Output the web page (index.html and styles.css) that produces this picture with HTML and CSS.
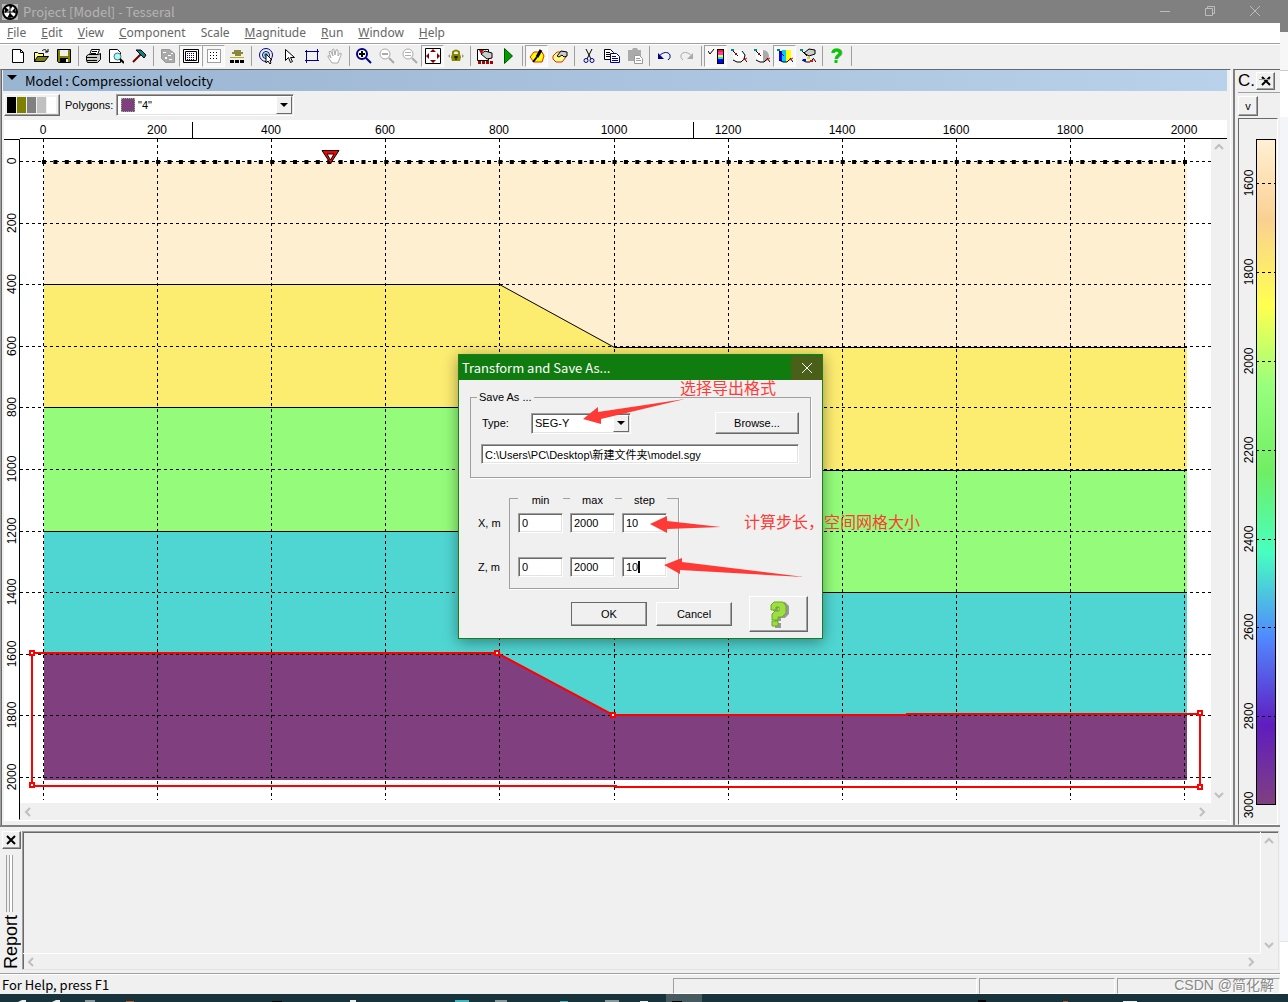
FILE: index.html
```html
<!DOCTYPE html>
<html lang="en">
<head>
  <meta charset="utf-8">
  <title>Project [Model] - Tesseral</title>
  <link rel="stylesheet" href="styles.css">
</head>
<body>
  <header class="titlebar">
    <svg class="app-icon" width="16" height="16"><rect width="16" height="16" fill="#bbb"/><circle cx="8" cy="8" r="7" fill="#fff" stroke="#000" stroke-width="2"/><path d="M3 3l4 3-4 3zM13 4l-3 3 4 3zM5 14l3-5 4 4zM7 1h4l-2 4z"/><path d="M1 8h14M8 1v14" stroke="#000"/></svg>
    <h1>Project [Model] - Tesseral</h1>
    <div class="window-buttons">
      <button aria-label="Minimize"><svg width="12" height="12"><path d="M1 6.5h10"/></svg></button>
      <button aria-label="Restore"><svg width="12" height="12"><path d="M1.5 3.5h7v7h-7zM3.5 3v-1.5h7v7h-2"/></svg></button>
      <button aria-label="Close"><svg width="12" height="12"><path d="M1 1l10 10M11 1l-10 10"/></svg></button>
    </div>
  </header>

  <div class="desktop">
    <div class="app">
      <nav class="menu">
        <a href="#"><u>F</u>ile</a>
        <a href="#"><u>E</u>dit</a>
        <a href="#"><u>V</u>iew</a>
        <a href="#"><u>C</u>omponent</a>
        <a href="#">Scale</a>
        <a href="#"><u>M</u>agnitude</a>
        <a href="#"><u>R</u>un</a>
        <a href="#"><u>W</u>indow</a>
        <a href="#"><u>H</u>elp</a>
      </nav>

      <div class="toolbar">
        <button aria-label="New"><svg width="16" height="16"><path d="M2.5 1.5h8l3 3v10h-11zM10.5 1.5v3h3" fill="#fff" stroke="#000"/></svg></button>
        <button aria-label="Open"><svg width="16" height="16"><path d="M1.5 13.5v-9h3l1 1h5v3" fill="#ff8" stroke="#000"/><path d="M1.5 13.5l3-5h11l-4 5z" fill="#808000" stroke="#000"/><path d="M9 3c2-2 4-2 5 1m-2 0h3v-3" fill="none" stroke="#000"/></svg></button>
        <button aria-label="Save"><svg width="16" height="16"><path d="M1.5 1.5h13v13h-12l-1-1z" fill="#808000" stroke="#000"/><path d="M4 2h8v6h-8z" fill="#eee"/><path d="M4 10h8v4h-8z"/><path d="M10 11h2v3h-2z" fill="#eee"/></svg></button>
        <i></i>
        <button aria-label="Print"><svg width="16" height="16"><path d="M4.5 7l2-5.5h8l-2 5.5M7 3.5h5M6 5.5h5" fill="#fff" stroke="#000"/><path d="M1.5 8l2-1.5h10l2-1v6l-3 3h-10l-1-2z" fill="#ccc" stroke="#000"/><path d="M2 9.5h10M2 12.5h10" stroke="#000"/><path d="M8 11h2v1h-2z" fill="#cc0"/></svg></button>
        <button aria-label="Print preview"><svg width="16" height="16"><path d="M1.5 1.5h8l3 3v10h-11z" fill="#fff" stroke="#000"/><circle cx="9.5" cy="8.5" r="3.5" fill="#9ff" stroke="#666"/><path d="M12 11l4 4" stroke="#000" stroke-width="2"/></svg></button>
        <button aria-label="Settings"><svg width="16" height="16"><path d="M2 14l8-8" stroke="#600" stroke-width="2"/><path d="M5 2h5l5 5-2 3-6-6z" fill="#088" stroke="#000"/></svg></button>
        <i></i>
        <button aria-label="Frames"><svg width="16" height="16"><path d="M1.5 1.5h8l5 4v9h-9l-4-4z" fill="#aaa" stroke="#999"/><path d="M3 4h3v1h-3zM8 7h3v1h-3zM5 9h2v2h-2zM11 5h2v1h-2zM9 11h3v1h-3z" fill="#fff"/></svg></button>
        <button class="pressed" aria-label="Border"><svg width="16" height="16"><path d="M.5 1.5h15v13h-15zM2.5 3.5h11v9h-11z" fill="#fff" stroke="#000"/><path d="M4 5.5h8M4 7.5h8M4 9.5h8M4 11.5h8" stroke="#008" stroke-dasharray="1 1"/></svg></button>
        <button class="pressed" aria-label="Grid"><svg width="16" height="16"><path d="M1.5 1.5h13v13h-13z" fill="#fff" stroke="#444" stroke-dasharray="1 1"/><path d="M4 4.5h9M4 7.5h9M4 10.5h9" stroke="#000" stroke-dasharray="1 2"/></svg></button>
        <button aria-label="Receivers"><svg width="16" height="16"><path d="M3 4h2v-2h7v2h2v2h-2v2h-6v-2h-3z" fill="#888840"/><path d="M1 9.5h14" stroke="#bbb000"/><path d="M1 12h4v3h-4zM6 12h4v3h-4zM11 12h4v3h-4z"/></svg></button>
        <i></i>
        <button aria-label="Target"><svg width="16" height="16"><circle cx="8" cy="7" r="6.5" fill="none" stroke="#008"/><circle cx="8" cy="7" r="3.5" fill="none" stroke="#008"/><circle cx="8" cy="7" r="2" fill="#0aa"/><path d="M8 6v9l2-2 2 3 1-1-1-3h2z" stroke="#000" fill="#fff"/></svg></button>
        <button aria-label="Select"><svg width="16" height="16"><path d="M4.5 1.5v11l3-3 2 5 2-1-2-4h4z" fill="#fff" stroke="#000"/></svg></button>
        <button aria-label="Rectangle"><svg width="16" height="16"><path d="M2.5 2v13M13.5 1v12M1 3.5h14M1 12.5h14" fill="none" stroke="#008"/></svg></button>
        <button aria-label="Pan"><svg width="16" height="16"><path d="M5 15l-4-6q-1-2 2-1l1 2-2-6q1-2 2 0l2 4-1-6q2-2 2 0l1 5 1-5q2-1 2 1v5l2-3q2 0 1 2l-3 8z" fill="#fff" stroke="#aaa"/></svg></button>
        <i></i>
        <button aria-label="Zoom in"><svg width="16" height="16"><circle cx="6" cy="6" r="5" fill="#fff" stroke="#008" stroke-width="2"/><path d="M3 6h6M6 3v6" stroke="#000" stroke-width="2"/><path d="M10 10l5 5" stroke="#008" stroke-width="2"/></svg></button>
        <button aria-label="Zoom out"><svg width="16" height="16"><circle cx="6" cy="6" r="5" fill="#fff" stroke="#aaa"/><path d="M3 6h6M10 10l5 5" stroke="#aaa" stroke-width="2"/></svg></button>
        <button aria-label="Zoom reset"><svg width="16" height="16"><circle cx="6" cy="6" r="5" fill="#fff" stroke="#aaa"/><path d="M3 4.5h6M3 7.5h6" stroke="#aaa"/><path d="M10 10l5 5" stroke="#aaa" stroke-width="2"/></svg></button>
        <button class="pressed" aria-label="Fit"><svg width="16" height="16"><path d="M.5.5h15v15h-15z" fill="#fff" stroke="#000"/><path d="M8 1l3 3h-6zM8 15l3-3h-6zM1 8l3-3v6zM15 8l-3-3v6z" fill="#800"/></svg></button>
        <button aria-label="Lock"><svg width="16" height="16"><path d="M5 7v-3q3-3 6 0v3" fill="none" stroke="#880" stroke-width="2"/><path d="M4 6h8l1 3-1 4h-8l-1-4z" fill="#880"/><path d="M8 8v4M6 9h4" stroke="#000"/><path d="M0 8l2-2v4zM16 8l-2-2v4z" fill="#999"/></svg></button>
        <i></i>
        <button aria-label="Model wizard"><svg width="16" height="16"><path d="M.5 1.5h11v11h-11z" fill="#fff" stroke="#000"/><path d="M2 2h5l-3 4z" fill="#c00"/><path d="M4 6l4-3 7 2v5l-5 1z" fill="#ccc" stroke="#000"/><path d="M1 14.5h15" stroke="#a00" stroke-width="3" stroke-dasharray="3 1"/></svg></button>
        <button aria-label="Run"><svg width="16" height="16"><path d="M4.5.5v15l8-7.5z" fill="#090" stroke="#050"/></svg></button>
        <i></i>
        <button class="pressed" aria-label="Draw"><svg width="16" height="16"><path d="M1 9l4-5h8l2 4-2 6h-8z" fill="#ff0" stroke="#e20"/><path d="M8 9l4-7" stroke="#000" stroke-width="3"/><path d="M4 14l4-5" stroke="#000" stroke-width="2"/></svg></button>
        <button aria-label="Edit polygon"><svg width="16" height="16"><path d="M1 8l4-4h8l1 5-4 5h-6l-3-3z" fill="#ff8" stroke="#e20"/><path d="M5 8l4-5 6 1v4l-3 1-2-2-3 2z" fill="#ccc" stroke="#000"/></svg></button>
        <i></i>
        <button aria-label="Cut"><svg width="16" height="16"><path d="M5 1l5 10M11 1l-5 10" stroke="#000"/><circle cx="5" cy="12.5" r="2" fill="none" stroke="#008"/><circle cx="11" cy="12.5" r="2" fill="none" stroke="#008"/></svg></button>
        <button aria-label="Copy"><svg width="16" height="16"><path d="M.5 1.5h6l3 3v7h-9zM2 4.5h4M2 6.5h5M2 8.5h5" fill="#fff" stroke="#000"/><path d="M6.5 5.5h6l3 3v6h-9zM8 8.5h4M8 10.5h6M8 12.5h6" fill="#fff" stroke="#008"/></svg></button>
        <button aria-label="Paste"><svg width="16" height="16"><path d="M1 2h4l1-2h4l1 2h3v11h-13z" fill="#aaa"/><path d="M7.5 7.5h5l3 3v5h-8zM9 10.5h4M9 12.5h5" fill="#fff" stroke="#999"/></svg></button>
        <i></i>
        <button aria-label="Undo"><svg width="16" height="16"><path d="M3 8c4-4 9-5 11-1q1 3-2 5" fill="none" stroke="#008"/><path d="M2 5v6h6z" fill="#008"/></svg></button>
        <button aria-label="Redo"><svg width="16" height="16"><path d="M13 8c-4-4-9-5-11-1q-1 3 2 5" fill="none" stroke="#aaa"/><path d="M14 5v6h-6z" fill="#aaa"/></svg></button>
        <i></i>
        <button class="pressed" aria-label="Legend"><svg width="16" height="16"><path d="M0 3l2 3 4-5" fill="none" stroke="#000"/><path d="M9 1h7v15h-7z"/><path d="M10 2h5v2h-5z" fill="#f22"/><path d="M10 4h5v3h-5z" fill="#f3d"/><path d="M10 7h5v2h-5z" fill="#ff0"/><path d="M10 9h5v2h-5z" fill="#0ee"/><path d="M10 11h5v4h-5z" fill="#00f"/></svg></button>
        <button aria-label="Palette 1"><svg width="16" height="16"><circle cx="8" cy="8" r="6" fill="#fff"/><path d="M1 2l6 6M2 12l4 2h4l3-3 1-4-3-4M13 10l3 4" fill="none" stroke="#000"/><path d="M0 1h3v2h-3z" fill="#088"/><path d="M4 5h2v2h-2z" fill="#a00"/><path d="M12 12l4-2" stroke="#f00"/></svg></button>
        <button aria-label="Palette 2"><svg width="16" height="16"><circle cx="8" cy="8" r="6" fill="#fff"/><path d="M9 2a6 6 0 0 1 0 12z" fill="#aaa"/><path d="M1 2l6 6M2 12l4 2h4l3-3M13 10l3 4" fill="none" stroke="#000"/><path d="M0 1h3v2h-3z" fill="#088"/><path d="M4 5h2v2h-2z" fill="#a00"/><path d="M12 12l4-2" stroke="#f00"/></svg></button>
        <button class="pressed" aria-label="Palette 3"><svg width="16" height="16"><path d="M2 3h3v10h-3z" fill="#00f"/><path d="M5 2h4v12h-4z" fill="#0cf"/><path d="M9 2h5v10l-5 2z" fill="#ff0"/><path d="M1 2l6 6M2 12l4 2h4l3-3M13 10l3 4" fill="none" stroke="#000"/><path d="M0 1h3v2h-3z" fill="#088"/><path d="M12 12l4-2" stroke="#f00"/></svg></button>
        <button aria-label="Palette 4"><svg width="16" height="16"><path d="M4 5l5-4 6 1v4l-6 2z" fill="#ccc" stroke="#000"/><path d="M1 2l6 6M2 12l4 2h4l3-3M13 10l3 4" fill="none" stroke="#000"/><path d="M0 1h3v2h-3z" fill="#088"/><path d="M3 11h3v2h-3z" fill="#00f"/><path d="M7 9h3v2h-3z" fill="#dd0"/><path d="M10 12h3v2h-3z" fill="#f00"/></svg></button>
        <i></i>
        <button aria-label="Help"><svg width="16" height="16"><path d="M4 5c0-4 8-4 8 0 0 3-4 2-4 6" fill="none" stroke="#999" stroke-width="3"/><path d="M4 5c0-4 7-4 7 0 0 3-4 2-4 6M7 12v3" fill="none" stroke="#0c0" stroke-width="3"/></svg></button>
        <i></i>
      </div>

      <main class="workspace">
        <section class="model">
          <h2 class="model-title"><svg width="10" height="6"><path d="M0 0h10l-5 5z"/></svg>Model : Compressional velocity</h2>
          <div class="model-tools">
            <button class="palette" aria-label="Palette"><b></b><b></b><b></b><b></b><b></b></button>
            <label for="polygons">Polygons:</label>
            <div class="combo combo-polygons">
              <span class="swatch"></span>
              <select id="polygons"><option>"4"</option></select>
              <span class="drop"></span>
            </div>
          </div>
          <div class="plot">
            <svg class="ruler-x" aria-label="X scale">
              <g transform="translate(-4 -120)">
                <path d="M20 138.5h1207M192.5 122v16M693.5 122v16" stroke="#000"/>
                <g text-anchor="middle">
                  <text x="43" y="134">0</text>
                  <text x="157" y="134">200</text>
                  <text x="271" y="134">400</text>
                  <text x="385" y="134">600</text>
                  <text x="499" y="134">800</text>
                  <text x="614" y="134">1000</text>
                  <text x="728" y="134">1200</text>
                  <text x="842" y="134">1400</text>
                  <text x="956" y="134">1600</text>
                  <text x="1070" y="134">1800</text>
                  <text x="1184" y="134">2000</text>
                </g>
              </g>
            </svg>
            <svg class="ruler-z" aria-label="Z scale">
              <g transform="translate(-4 -139)">
                <path d="M4 139.5h15.5v680" fill="none" stroke="#000"/>
                <g text-anchor="middle">
                  <text transform="translate(16 161) rotate(-90)">0</text>
                  <text transform="translate(16 223) rotate(-90)">200</text>
                  <text transform="translate(16 284) rotate(-90)">400</text>
                  <text transform="translate(16 346) rotate(-90)">600</text>
                  <text transform="translate(16 407) rotate(-90)">800</text>
                  <text transform="translate(16 469) rotate(-90)">1000</text>
                  <text transform="translate(16 531) rotate(-90)">1200</text>
                  <text transform="translate(16 592) rotate(-90)">1400</text>
                  <text transform="translate(16 654) rotate(-90)">1600</text>
                  <text transform="translate(16 715) rotate(-90)">1800</text>
                  <text transform="translate(16 777) rotate(-90)">2000</text>
                </g>
              </g>
            </svg>
            <svg class="chart" aria-label="Velocity model">
              <g transform="translate(-20 -139)">
                <!-- layers -->
                <path d="M44 162h1143v186h-573l-115-64h-455z" fill="#feefd1"/>
                <path d="M44 284h455l115 63h573v123h-573l-115-63h-455z" fill="#fcec70"/>
                <path d="M44 407h455l115 63h573v122h-573l-115-61h-455z" fill="#94fc7a"/>
                <path d="M44 531h455l115 61h573v123h-573l-115-62h-455z" fill="#50d6d2"/>
                <path d="M44 653h455l115 62h573v65h-1143z" fill="#804080"/>
                <g fill="none" stroke="#000">
                  <path d="M44 284.5h455.5l115 63h572.5"/>
                  <path d="M44 407.5h455.5l115 63h572.5"/>
                  <path d="M44 531.5h455.5l115 61h572.5"/>
                </g>
                <!-- grid -->
                <path class="grid" d="M43.5 139v661M157.5 139v661M271.5 139v661M385.5 139v661M499.5 139v661M614.5 139v661M728.5 139v661M842.5 139v661M956.5 139v661M1070.5 139v661M1184.5 139v661"/>
                <path class="grid" d="M20 161.5h1191M20 223.5h1191M20 284.5h1191M20 346.5h1191M20 407.5h1191M20 469.5h1191M20 531.5h1191M20 592.5h1191M20 654.5h1191M20 715.5h1191M20 777.5h1191"/>
                <!-- receivers and source -->
                <path class="receivers" d="M42 162h1146"/>
                <path d="M322 150.5h17l-8.5 13z" fill="#f00" stroke="#000"/>
                <path d="M327 154h7l-3.5 6z" fill="#fff" stroke="#000"/>
                <!-- selected polygon -->
                <path d="M32 653h465l116 62h294v-1h293v73h-584v-1h-584z" fill="none" stroke="#f00" stroke-width="2"/>
                <path d="M30 651h4v4h-4zM495 651h4v4h-4zM611 713h4v4h-4zM1198 711h4v4h-4zM1198 785h4v4h-4zM30 783h4v4h-4z" fill="#fff" stroke="#f00" stroke-width="2"/>
              </g>
            </svg>
            <div class="vscroll"><svg width="10" height="8"><path d="M1 6l4-4 4 4"/></svg><svg width="10" height="8"><path d="M1 2l4 4 4-4"/></svg></div>
            <div class="hscroll"><svg width="8" height="10"><path d="M6 1l-4 4 4 4"/></svg><svg width="8" height="10"><path d="M2 1l4 4-4 4"/></svg></div>
          </div>
        </section>

        <aside class="colors">
          <div class="colors-head"><h2>C.</h2><button aria-label="Close colors"><svg width="14" height="10"><path d="M3 1l8 8M11 1l-8 8" stroke="#000" stroke-width="2"/><path d="M0 3.5h11" stroke="#a0a0a0"/></svg></button></div>
          <button class="colors-menu">v</button>
          <div class="colors-scale">
            <svg aria-label="Velocity scale">
              <defs>
                <linearGradient id="velocity" x2="0" y2="1">
                  <stop offset="0%" stop-color="#fff0d5"/>
                  <stop offset="12%" stop-color="#fad092"/>
                  <stop offset="25%" stop-color="#ffff50"/>
                  <stop offset="37%" stop-color="#98ff7c"/>
                  <stop offset="50%" stop-color="#70ee64"/>
                  <stop offset="62%" stop-color="#48ffc0"/>
                  <stop offset="75%" stop-color="#5088ff"/>
                  <stop offset="88%" stop-color="#601cc0"/>
                  <stop offset="100%" stop-color="#804080"/>
                </linearGradient>
              </defs>
              <g transform="translate(-1239 -119)">
                <rect x="1256.5" y="139.5" width="19" height="665" fill="url(#velocity)" stroke="#000"/>
                <path class="grid" d="M1256 183.5h20M1256 272.5h20M1256 361.5h20M1256 450.5h20M1256 539.5h20M1256 627.5h20M1256 716.5h20"/>
                <g text-anchor="middle">
                  <text transform="translate(1253 183) rotate(-90)">1600</text>
                  <text transform="translate(1253 272) rotate(-90)">1800</text>
                  <text transform="translate(1253 361) rotate(-90)">2000</text>
                  <text transform="translate(1253 450) rotate(-90)">2200</text>
                  <text transform="translate(1253 539) rotate(-90)">2400</text>
                  <text transform="translate(1253 627) rotate(-90)">2600</text>
                  <text transform="translate(1253 716) rotate(-90)">2800</text>
                  <text transform="translate(1253 805) rotate(-90)">3000</text>
                </g>
              </g>
            </svg>
          </div>
        </aside>
      </main>

      <section class="report">
        <div class="report-side">
          <button aria-label="Close report"><svg width="10" height="10"><path d="M1 1l8 8M9 1l-8 8" stroke="#000" stroke-width="2"/></svg></button>
          <div class="grip"></div>
          <h2>Report</h2>
        </div>
        <div class="report-text">
          <div class="vscroll"><svg width="10" height="8"><path d="M1 6l4-4 4 4"/></svg><svg width="10" height="8"><path d="M1 2l4 4 4-4"/></svg></div>
          <div class="hscroll"><svg width="8" height="10"><path d="M6 1l-4 4 4 4"/></svg><svg width="8" height="10"><path d="M2 1l4 4-4 4"/></svg></div>
        </div>
      </section>

      <footer class="status">
        <p>For Help, press F1</p>
        <div class="pane pane-wide"></div>
        <div class="pane pane-mid"></div>
        <div class="pane pane-last"></div>
      </footer>
    </div>
    <div class="behind"></div>
  </div>

  <div class="taskbar">
    <svg width="1288" height="8">
      <path d="M666 0h36v8h-36z" fill="#465a60"/>
      <path d="M18 8l4-2h4v2zM52 8l4-2h4v2zM350 6h6v2h-6zM640 7h8v1h-8zM1123 7h14v1h-14z" fill="#eee"/>
      <path d="M85 6h10v2h-10zM495 6h12v2h-12zM605 6h14v2h-14z" fill="#8a979b"/>
      <path d="M126 7h8v1h-8zM1063 7h5v1h-5z" fill="#c4501c"/>
      <path d="M272 7h10v1h-10zM672 7h10v1h-10zM978 6h8v2h-8z"/>
      <path d="M455 6h14v2h-14zM560 7h8v1h-8z" fill="#3fb8c0"/>
    </svg>
  </div>

  <form class="dialog" role="dialog" aria-labelledby="dialogTitle">
    <div class="dialog-title">
      <h2 id="dialogTitle">Transform and Save As...</h2>
      <button type="button" aria-label="Close"><svg width="12" height="12"><path d="M1 1l10 10M11 1l-10 10" stroke="#fff"/></svg></button>
    </div>
    <div class="dialog-body">
      <fieldset class="save-as">
        <legend>Save As ...</legend>
        <div class="save-row">
          <label for="type">Type:</label>
          <div class="combo combo-type">
            <select id="type"><option>SEG-Y</option></select>
            <span class="drop"></span>
          </div>
          <button type="button" class="btn browse">Browse...</button>
        </div>
        <input type="text" class="path" aria-label="File" value="C:\Users\PC\Desktop\新建文件夹\model.sgy">
      </fieldset>
      <div class="ranges">
        <div class="range-names"><span>X, m</span><span>Z, m</span></div>
        <div class="range-box">
          <span class="col">min</span><span class="col">max</span><span class="col">step</span>
          <input type="text" aria-label="X min" value="0">
          <input type="text" aria-label="X max" value="2000">
          <input type="text" aria-label="X step" value="10">
          <input type="text" aria-label="Z min" value="0">
          <input type="text" aria-label="Z max" value="2000">
          <div class="caret-box"><input type="text" aria-label="Z step" value="10"><i class="caret"></i></div>
        </div>
      </div>
      <div class="dialog-buttons">
        <button type="button" class="btn ok">OK</button>
        <button type="button" class="btn">Cancel</button>
        <button type="button" class="btn help" aria-label="Help"><svg width="24" height="28"><path d="M5 6l4-4h8l4 4v8l-4 4h-4v3h-6v-7l3-3h4v-3h-4v3h-5zM7 23h6v5h-6z" transform="translate(1 0)" fill="#999"/><path d="M4 5l3-3h9l3 4v7l-4 4h-4v3h-6v-6l3-3h4v-4h-3v3h-5zM5 21h6v5h-6z" fill="#9be040" stroke="#6aa820"/></svg></button>
      </div>
    </div>
  </form>

  <!-- notes on top of the dialog -->
  <p class="note note-format">选择导出格式</p>
  <p class="note note-step">计算步长，空间网格大小</p>
  <svg class="arrows" width="230" height="180">
    <g transform="translate(-580 -400)" fill="#ff3a36">
      <path d="M583 419l15-12v5l87-13-84 20v5z"/>
      <path d="M650 524l17-8v5l54 6-54 2v4z"/>
      <path d="M664 565l18-7v4l122 15-124-7v4z"/>
    </g>
  </svg>
  <p class="watermark">CSDN @简化解</p>
</body>
</html>
```
FILE: styles.css
```css
* {
  margin: 0;
  padding: 0;
  box-sizing: border-box;
}

body {
  display: flex;
  flex-direction: column;
  height: 100vh;
  overflow: hidden;
  position: relative;
  background: #f0f0f0;
  color: #000;
  font-family: "Liberation Sans", "Noto Sans CJK SC", sans-serif;
  font-size: 11px;
}

svg {
  display: block;
}

button,
input,
select {
  font: inherit;
  color: inherit;
  border: none;
  border-radius: 0;
  background: none;
}

h1,
h2 {
  font-weight: normal;
}

.titlebar h1,
.model-title,
.status p,
.dialog-title h2 {
  font-family: "Noto Sans CJK SC", sans-serif;
  font-size: 13px;
  line-height: 16px;
}

/* Title bar */
.titlebar {
  display: flex;
  align-items: center;
  height: 23px;
  padding: 0 11px 0 2px;
  background: #808080;
  color: #b4b4b4;
}

.titlebar h1 {
  margin-left: 5px;
}

.window-buttons {
  display: flex;
  margin-left: auto;
}

.window-buttons button {
  display: flex;
  align-items: center;
  justify-content: center;
  width: 45px;
  height: 22px;
  padding-bottom: 2px;
}

.window-buttons path {
  fill: none;
  stroke: #bcbcbc;
}

.desktop {
  display: flex;
  flex: 1;
  min-height: 0;
}

.app {
  display: flex;
  flex-direction: column;
  flex: 1;
  min-width: 0;
}

/* edge of the window that lies behind */
.behind {
  width: 8px;
  background: linear-gradient(#808080 9px, #f7f7f7 9px, #f7f7f7 47px, #ccc 47px, #ccc 48px, #fff 48px, #fff 94px, #f4f5f8 94px, #f4f5f8 918px, #e4e4e4 918px, #e4e4e4 919px, #fff 919px);
}

/* Menu */
.menu {
  display: flex;
  align-items: center;
  gap: 15px;
  height: 20px;
  padding-left: 7px;
  background: #fff;
  font-family: "Noto Sans", sans-serif;
  font-size: 12px;
  line-height: 16px;
}

.menu a {
  color: #666;
  text-decoration: none;
}

/* Toolbar */
.toolbar {
  display: flex;
  align-items: center;
  height: 26px;
  padding: 0 0 1px 6px;
  border-top: 1px solid #a0a0a0;
  box-shadow: inset 0 1px #fff;
}

.toolbar button {
  display: flex;
  align-items: center;
  justify-content: center;
  width: 23px;
  height: 22px;
}

.toolbar button.pressed {
  background: #f8f8f8;
  border: 1px solid;
  border-color: #a0a0a0 #fff #fff #a0a0a0;
}

.toolbar i {
  width: 1px;
  height: 20px;
  margin: 0 2px 0 3px;
  background: #a0a0a0;
}

/* Workspace */
.workspace {
  display: flex;
  flex: 1;
  min-height: 0;
}

.model {
  display: flex;
  flex-direction: column;
  flex: 1;
  min-width: 0;
  padding-left: 2px;
  border-top: 1px solid #696969;
  border-left: 1px solid #a0a0a0;
  border-right: 1px solid #fff;
  background: linear-gradient(90deg, #696969 1px, #f0f0f0 1px);
}

.model-title {
  display: flex;
  align-items: center;
  height: 21px;
  margin-right: 3px;
  padding-left: 4px;
  background: linear-gradient(90deg, #99b4d1, #b9d1ea);
}

.model-title svg {
  margin: 0 8px 6px 0;
}

.model-tools {
  display: flex;
  align-items: center;
  height: 29px;
  padding: 0 0 1px 1px;
}

.palette {
  display: flex;
  align-items: center;
  width: 56px;
  height: 22px;
  padding: 0 2px;
  border: 1px solid;
  border-color: #fff #696969 #696969 #fff;
  box-shadow: inset -1px -1px #a0a0a0;
}

.palette b {
  width: 9px;
  height: 16px;
  margin-right: 1px;
  background: #000;
}

.palette b:nth-child(2) { background: #808000; }
.palette b:nth-child(3) { background: #808080; }
.palette b:nth-child(4) { background: #c0c0c0; }
.palette b:nth-child(5) { background: #fff; }

.model-tools label {
  width: 51px;
  margin-left: 5px;
}

.combo {
  display: flex;
  position: relative;
  align-items: center;
  background: #fff;
  border: 1px solid;
  border-color: #a0a0a0 #fff #fff #a0a0a0;
  box-shadow: inset 1px 1px #696969, inset -1px -1px #e3e3e3;
}

.combo select {
  flex: 1;
  min-width: 0;
  height: 100%;
  padding-left: 3px;
  appearance: none;
  outline: none;
}

.combo-polygons {
  width: 178px;
  height: 22px;
}

.combo-type {
  width: 100px;
  height: 21px;
}

.swatch {
  width: 14px;
  height: 14px;
  margin-left: 4px;
  background: #804080;
  border: 1px dotted #7fbf7f;
}

.drop {
  display: flex;
  align-items: center;
  justify-content: center;
  width: 16px;
  align-self: stretch;
  margin: 1px;
  background: #f0f0f0;
  border: 1px solid;
  border-color: #fff #696969 #696969 #fff;
  pointer-events: none;
}

.drop::after {
  content: "";
  border: 4px solid transparent;
  border-top-color: #000;
  border-bottom: none;
}

/* Plot */
.plot {
  display: grid;
  flex: 1;
  grid-template-columns: 16px 1fr 16px;
  grid-template-rows: 19px 1fr 17px;
  margin: 0 3px 4px 1px;
  border-bottom: 1px solid #fff;
  min-height: 0;
}

.plot svg text,
.colors svg text {
  font-size: 12px;
}

.ruler-x,
.ruler-z,
.chart {
  width: 100%;
  height: 100%;
  background: #fff;
}

.ruler-x {
  grid-area: 1 / 1 / 2 / 4;
}

.ruler-z {
  grid-area: 2 / 1 / 4 / 2;
}

.chart {
  grid-area: 2 / 2 / 3 / 3;
}

.plot .vscroll {
  grid-area: 2 / 3 / 3 / 4;
}

.plot .hscroll {
  grid-area: 3 / 2 / 4 / 3;
}

.grid {
  fill: none;
  stroke: #000;
  stroke-dasharray: 3 3;
}

.receivers {
  stroke: #000;
  stroke-width: 4;
  stroke-dasharray: 4 7.41;
}

.vscroll,
.hscroll {
  display: flex;
  align-items: center;
  justify-content: space-between;
}

.vscroll {
  flex-direction: column;
  padding: 4px 0;
}

.hscroll {
  padding: 0 5px 0 4px;
}

.vscroll path,
.hscroll path {
  fill: none;
  stroke: #bfbfbf;
  stroke-width: 2;
}

/* Color scale */
.colors {
  display: flex;
  flex-direction: column;
  width: 47px;
  margin-left: 2px;
  padding-left: 3px;
  border-top: 1px solid #696969;
  border-left: 2px solid #808080;
}

.colors-head {
  display: flex;
  align-items: center;
  justify-content: space-between;
  height: 23px;
  padding-right: 5px;
  border-bottom: 1px solid #a0a0a0;
}

.colors-head h2 {
  font-size: 17px;
}

.colors button,
.report-side button {
  display: flex;
  align-items: center;
  justify-content: center;
  width: 19px;
  height: 18px;
  border: 1px solid;
  border-color: #fff #696969 #696969 #fff;
  box-shadow: inset -1px -1px #a0a0a0;
}

.colors .colors-menu {
  width: 20px;
  height: 20px;
  margin: 3px 0 2px;
}

.colors-scale {
  flex: 1;
  min-height: 0;
  margin-right: 2px;
  border: 1px solid;
  border-color: #696969 #fff #fff #696969;
}

.colors-scale svg {
  width: 100%;
  height: 100%;
}

/* Report */
.report {
  display: flex;
  height: 148px;
  padding: 4px 1px 3px 0;
  border-top: 2px solid #808080;
}

.report-side {
  display: flex;
  flex-direction: column;
  align-items: center;
  width: 22px;
}

.grip {
  width: 7px;
  height: 57px;
  margin: 6px 4px 3px 0;
  border: 1px solid #a0a0a0;
  border-width: 0 1px;
  background: linear-gradient(90deg, #f0f0f0 2px, #a0a0a0 2px, #a0a0a0 3px, #fff 3px);
}

.report-side h2 {
  writing-mode: vertical-rl;
  transform: rotate(180deg);
  font-size: 18px;
  line-height: 20px;
}

.report-text {
  display: grid;
  flex: 1;
  grid-template-columns: 1fr 17px;
  grid-template-rows: 1fr 16px;
  padding-right: 1px;
  border: 1px solid;
  border-color: #a0a0a0 #e3e3e3 #e3e3e3 #a0a0a0;
  box-shadow: inset 1px 1px #696969;
}

.report-text .vscroll {
  grid-area: 1 / 2 / 2 / 3;
  border-left: 1px solid #fff;
  padding: 5px 1px 4px 0;
}

.report-text .hscroll {
  grid-area: 2 / 1 / 3 / 2;
  border-top: 1px solid #fff;
}

/* Status bar */
.status {
  display: flex;
  align-items: center;
  gap: 2px;
  height: 21px;
  border-top: 1px solid #a0a0a0;
  box-shadow: inset 0 1px #fff;
}

.status p {
  flex: 1;
  padding: 2px 0 0 2px;
}

.pane {
  height: 16px;
  margin-top: 3px;
  border: 1px solid;
  border-color: #a0a0a0 #fff #fff #a0a0a0;
}

.pane-wide { width: 304px; }
.pane-mid { width: 136px; }
.pane-last { width: 163px; }

.taskbar {
  height: 8px;
  overflow: hidden;
  background: #18333b;
}

/* Dialog */
.dialog {
  position: absolute;
  left: 458px;
  top: 354px;
  width: 365px;
  height: 285px;
  background: #f0f0f0;
  border: 1px solid #1c7c1c;
  box-shadow: 0 3px 14px rgba(0, 0, 0, 0.4);
}

.dialog-title {
  display: flex;
  align-items: center;
  justify-content: space-between;
  height: 25px;
  padding-left: 3px;
  background: #107c10;
  color: #fff;
}

.dialog-title button {
  display: flex;
  align-items: center;
  justify-content: center;
  width: 31px;
  height: 24px;
  background: #4a5f17;
}

.dialog-body {
  padding: 10px 11px 0;
}

.save-as {
  height: 88px;
  padding: 8px 11px 0 10px;
  border: 1px solid #a0a0a0;
  box-shadow: 1px 1px #fff;
}

.save-as legend {
  margin-left: -4px;
  padding: 0 2px;
  line-height: 14px;
}

.save-row {
  display: flex;
  align-items: center;
  margin-bottom: 10px;
}

.save-row label {
  width: 50px;
  padding-left: 1px;
}

.btn {
  width: 76px;
  height: 24px;
  background: #f0f0f0;
  border: 1px solid;
  border-color: #fff #696969 #696969 #fff;
  box-shadow: inset -1px -1px #a0a0a0;
}

.browse {
  width: 84px;
  height: 22px;
  margin-left: auto;
}

.dialog input {
  width: 100%;
  height: 20px;
  padding: 0 3px;
  background: #fff;
  border: 1px solid;
  border-color: #a0a0a0 #fff #fff #a0a0a0;
  box-shadow: inset 1px 1px #696969, inset -1px -1px #e3e3e3;
}

.ranges {
  display: flex;
  margin: 20px 0 0 8px;
}

.range-names {
  display: flex;
  flex-direction: column;
  gap: 24px;
  width: 31px;
  padding-top: 15px;
  line-height: 20px;
}

.range-box {
  display: grid;
  grid-template-columns: 45px 45px 45px;
  grid-template-rows: 14px 20px 20px;
  column-gap: 7px;
  width: 170px;
  height: 91px;
  padding: 0 8px;
  border: 1px solid #a0a0a0;
  box-shadow: 1px 1px #fff;
}

.range-box input:nth-of-type(n+4),
.caret-box {
  margin-top: 24px;
}

.col {
  width: 45px;
  margin-top: -6px;
  line-height: 14px;
  text-align: center;
  background: #f0f0f0;
}

.caret-box {
  position: relative;
}

.caret {
  position: absolute;
  left: 16px;
  top: 4px;
  width: 2px;
  height: 12px;
  background: #000;
}

.dialog-buttons {
  display: flex;
  align-items: center;
  gap: 9px;
  margin: 7px 0 0 101px;
}

.ok {
  border-color: #696969;
}

.help {
  display: flex;
  align-items: center;
  justify-content: center;
  width: 59px;
  height: 36px;
  margin-left: 8px;
}

/* Notes */
.note {
  position: absolute;
  color: #ff3a36;
  font-family: "Noto Sans CJK SC", sans-serif;
  font-size: 16px;
  line-height: 20px;
  white-space: nowrap;
}

.note-format {
  left: 680px;
  top: 377px;
}

.note-step {
  left: 744px;
  top: 511px;
}

.arrows {
  position: absolute;
  left: 580px;
  top: 400px;
  overflow: visible;
  pointer-events: none;
}

.watermark {
  position: absolute;
  right: 14px;
  bottom: 7px;
  color: #888;
  font-size: 14px;
  line-height: 20px;
  text-shadow: 1px 1px #fff;
}
```
